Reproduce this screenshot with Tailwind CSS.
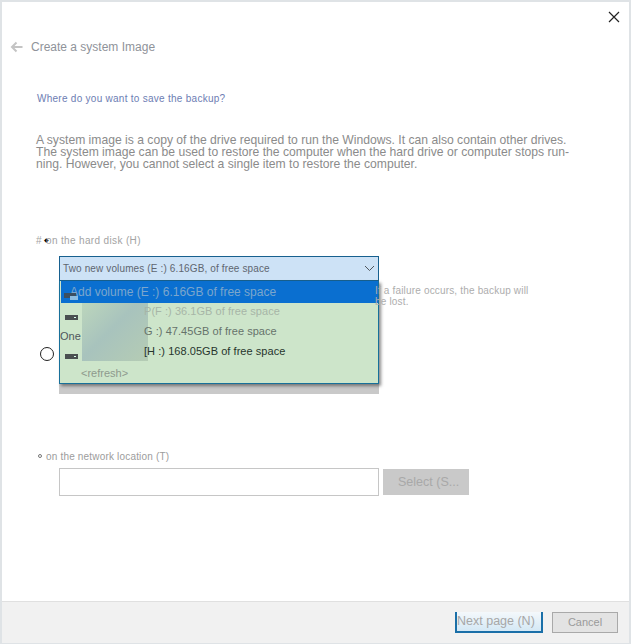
<!DOCTYPE html>
<html lang="en">
<head>
    <meta charset="UTF-8">
    <title>Create a system Image</title>
    <script src="https://cdn.jsdelivr.net/npm/@tailwindcss/browser@4"></script>
</head>
<body class="bg-white">
    <div class="relative w-[631px] h-[644px] flex flex-col overflow-hidden bg-white border-2 border-b border-[#dfe3e6] font-['Liberation_Sans',sans-serif]">

        <!-- Close -->
        <div class="h-[30px] flex justify-end pt-[9px] pr-[9px] shrink-0">
            <svg width="12" height="12" viewBox="0 0 12 12" fill="none" stroke="#222" stroke-width="1.2"><path d="M1 1l10 10M11 1L1 11"/></svg>
        </div>

        <!-- Title -->
        <div class="h-[30px] flex items-center gap-[8px] pl-[8px] shrink-0">
            <svg width="13" height="12" viewBox="0 0 13 12" fill="none" stroke="#c4c4c4" stroke-width="2"><path d="M12.500 6H2M6.500 1.500L2 6l4.500 4.500"/></svg>
            <span class="text-[12px] leading-[16px] text-[#8f939a]">Create a system Image</span>
        </div>

        <!-- Question + description -->
        <p class="mt-[31px] ml-[35px] text-[10px] leading-[12px] tracking-[0.27px] text-[#6d7db3]">Where do you want to save the backup?</p>
        <p class="mt-[29px] ml-[34px] w-[545px] text-[12.150px] leading-[12px] text-[#8b8b8b]">A system image is a copy of the drive required to run the Windows. It can also contain other drives.<br>The system image can be used to restore the computer when the hard drive or computer stops run-<br>ning. However, you cannot select a single item to restore the computer.</p>

        <!-- Hard disk option -->
        <div class="mt-[64px] ml-[34px] flex items-center h-[12px] text-[10px] tracking-[0.35px] text-[#a3a3a3]">
            <span class="w-[8px]">#</span><span class="w-[3px] text-black text-[6px] leading-none">◆</span><span class="-ml-[1px]">on the hard disk (H)</span>
        </div>

        <!-- Combo + options -->
        <div class="relative mt-[10px] ml-[57px] w-[320px] h-[138px] shrink-0">
            <div class="h-[25px] flex items-center justify-between pl-[3px] pr-[3px] bg-[#cde2f6] border border-[#17608f] text-[10px] tracking-[0.13px] text-[#5f6670]">
                <span>Two new volumes (E :) 6.16GB, of free space</span>
                <svg width="11" height="7" viewBox="0 0 11 7" fill="none" stroke="#50565c" stroke-width="1"><path d="M1 1l4.500 4.500L10 1"/></svg>
            </div>

            <!-- Disabled combo underneath the list -->
            <div class="absolute left-0 top-[128px] w-[320px] h-[10px] bg-[#c9c9c9]"></div>

            <!-- Open list -->
            <div class="absolute left-0 top-[25px] w-[320px] h-[103px] z-10 bg-[#cde5ca] border border-t-0 border-[#17709a] shadow-[2px_2px_3px_rgba(60,60,60,0.6)]">
                <div class="relative h-[22px] ml-[1px] bg-[#0a6fd0] flex items-center pl-[9px] text-[12px] text-[#7ba6cc]">
                    <svg class="absolute left-[3px] top-[9px]" width="14" height="10" viewBox="0 0 14 10"><rect x="0" y="3" width="12" height="5" fill="#3c4f60"/><rect x="6" y="6" width="8" height="4" fill="#8dbde0"/></svg>
                    <span>Add volume (E :) 6.16GB of free space</span>
                </div>

                <div class="relative">
                    <!-- Blurred-out block over the names -->
                    <div class="absolute left-[22px] top-0 w-[66px] h-[58px] bg-[linear-gradient(135deg,#bcd6bc_0%,#a8c3bd_45%,#b5ccb4_100%)]"></div>
                    <svg class="absolute left-[5px] top-[12px]" width="13" height="5"><rect width="13" height="5" fill="#4a4f50"/><rect x="9" y="2" width="2" height="1" fill="#dfe"/></svg>
                    <svg class="absolute left-[5px] top-[51px]" width="13" height="5"><rect width="13" height="5" fill="#4a4f50"/><rect x="9" y="2" width="2" height="1" fill="#dfe"/></svg>
                    <div class="relative -top-[2px] pl-[84px] text-[11px] leading-[20px] tracking-[0.05px]">
                        <p class="text-[#a7b5a7]">P(F :) 36.1GB of free space</p>
                        <p class="text-[#66736a]">G :) 47.45GB of free space</p>
                        <p class="text-[#27352d]">[H :) 168.05GB of free space</p>
                    </div>
                    <p class="relative -top-[2px] pl-[21px] mt-[2px] text-[11px] leading-[20px] text-[#8d9a8d]">&lt;refresh&gt;</p>
                </div>
            </div>
            <span class="absolute z-20 left-[1px] top-[74px] text-[11px] leading-[13px] text-[#50565c]">One</span>

            <!-- Second radio, only its circle is showing -->
            <div class="absolute -left-[19px] top-[91px] w-[14px] h-[14px] rounded-full border border-[#222] bg-white"></div>

            <!-- Note beside the combo -->
            <p class="absolute z-20 left-[316px] top-[29px] w-[170px] text-[10px] leading-[11px] tracking-[0.17px] text-[#adadad]">If a failure occurs, the backup will<br>be lost.</p>
        </div>

        <!-- Network option -->
        <div class="mt-[56px] ml-[36px] flex items-center gap-[4px] h-[12px] text-[10px] tracking-[0.18px] text-[#9c9c9c]">
            <span class="w-[4px] h-[4px] rounded-full border border-[#777]"></span>
            <span>on the network location (T)</span>
        </div>
        <div class="mt-[6px] ml-[57px] flex items-center gap-[4px]">
            <div class="w-[320px] h-[28px] border border-[#c6c6c6] bg-white"></div>
            <div class="w-[86px] h-[26px] bg-[#c9c9c9] flex items-center pl-[15px] text-[12.500px] text-[#a8a8a8]">Select (S...</div>
        </div>

        <!-- Footer -->
        <div class="mt-auto h-[42px] shrink-0 flex items-center justify-end gap-[9px] pr-[11px] bg-[#f1f1f1] border-t border-[#e0e0e0]">
            <div class="w-[88px] h-[21px] flex items-center pl-[0px] border-x-2 border-b-2 border-[#1a6fa8] bg-[linear-gradient(180deg,#f4f8fb_0%,#d4e8f5_100%)] text-[12.500px] text-[#a7a7a7]">Next page (N)</div>
            <div class="w-[66px] h-[21px] flex items-center justify-center border border-[#a9a9a9] bg-[#e3e3e3] text-[11px] text-[#9a9a9a]">Cancel</div>
        </div>
    </div>
</body>
</html>
